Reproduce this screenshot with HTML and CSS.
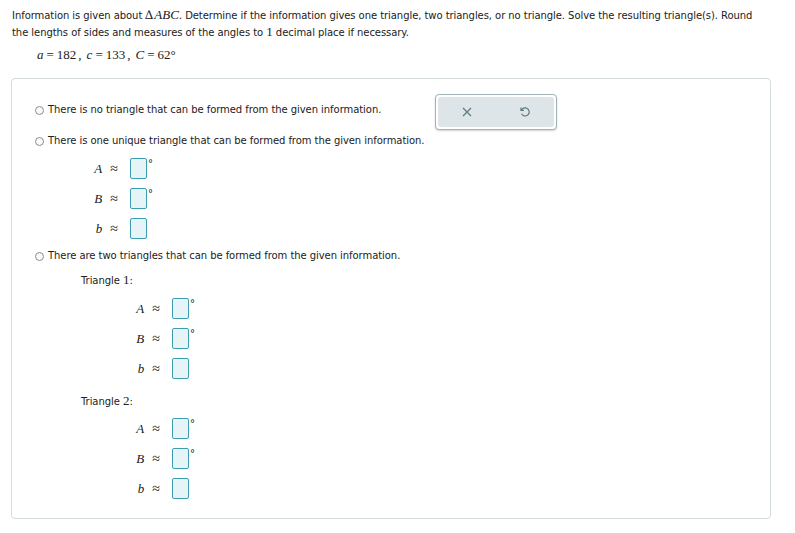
FILE: index.html
```html
<!DOCTYPE html>
<html>
<head>
<meta charset="utf-8">
<link rel="stylesheet" href="styles.css">
</head>
<body>
<p class="prompt">Information is given about <span class="m"><span class="delta">&#8710;</span><i>ABC</i></span>. Determine if the information gives one triangle, two triangles, or no triangle. Solve the resulting triangle(s). Round the lengths of sides and measures of the angles to <span class="m">1</span> decimal place if necessary.</p>
<div class="given"><i>a</i><span class="eq">=</span>182<span class="cm">,</span><i>c</i><span class="eq">=</span>133<span class="cm">,</span><i>C</i><span class="eq">=</span>62°</div>

<div class="card">
  <div class="choices">
    <div class="opt opt1"><span class="radio"></span>There is no triangle that can be formed from the given information.</div>
    <div class="opt opt2"><span class="radio"></span>There is one unique triangle that can be formed from the given information.</div>
    <div class="answers set1">
      <div class="lbl"><i>A</i><span class="ap">≈</span></div><div class="cell"><span class="box"></span><span class="deg">°</span></div>
      <div class="lbl"><i>B</i><span class="ap">≈</span></div><div class="cell"><span class="box"></span><span class="deg">°</span></div>
      <div class="lbl"><i>b</i><span class="ap">≈</span></div><div class="cell"><span class="box"></span></div>
    </div>
    <div class="opt opt3"><span class="radio"></span>There are two triangles that can be formed from the given information.</div>
    <div class="tri tri1">Triangle <span class="m">1</span>:</div>
    <div class="answers set2 s2a">
      <div class="lbl"><i>A</i><span class="ap">≈</span></div><div class="cell"><span class="box"></span><span class="deg">°</span></div>
      <div class="lbl"><i>B</i><span class="ap">≈</span></div><div class="cell"><span class="box"></span><span class="deg">°</span></div>
      <div class="lbl"><i>b</i><span class="ap">≈</span></div><div class="cell"><span class="box"></span></div>
    </div>
    <div class="tri tri2">Triangle <span class="m">2</span>:</div>
    <div class="answers set2 s2b">
      <div class="lbl"><i>A</i><span class="ap">≈</span></div><div class="cell"><span class="box"></span><span class="deg">°</span></div>
      <div class="lbl"><i>B</i><span class="ap">≈</span></div><div class="cell"><span class="box"></span><span class="deg">°</span></div>
      <div class="lbl"><i>b</i><span class="ap">≈</span></div><div class="cell"><span class="box"></span></div>
    </div>
  </div>
  <div class="tools">
    <div class="tools-inner">
      <span class="tool"><svg width="12" height="12" viewBox="0 0 12 12"><path d="M2 2 L10 10 M10 2 L2 10" stroke="#5e7880" stroke-width="1.2" fill="none"/></svg></span>
      <span class="tool"><svg width="12" height="12" viewBox="0 0 24 24"><path d="M4 3 V9 H10" stroke="#5e7880" stroke-width="2.4" fill="none"/><path d="M5.2 15.5 A8 8 0 1 0 6.5 6.5 L4 9" stroke="#5e7880" stroke-width="2.4" fill="none"/></svg></span>
    </div>
  </div>
</div>
</body>
</html>
```

FILE: styles.css
```css
html, body {
  margin: 0;
  padding: 0;
  background: #ffffff;
}
body {
  font-family: "DejaVu Sans", Verdana, sans-serif;
  font-size: 10px;
  letter-spacing: -0.06px;
  color: #212121;
  padding: 7px 0 0 12px;
}
.prompt {
  margin: 0;
  width: 748px;
  line-height: 16px;
}
.m {
  font-family: "Liberation Serif", "Times New Roman", serif;
  font-size: 13px;
  letter-spacing: 0;
}
.delta {
  font-style: normal;
  font-weight: 300;
  margin-right: 1px;
}
.given {
  margin: 4px 0 0 25px;
  height: 20px;
  line-height: 20px;
  font-family: "Liberation Serif", "Times New Roman", serif;
  font-size: 13px;
  letter-spacing: 0;
}
.given .eq {
  margin: 0 3px;
}
.given .cm {
  margin: 0 5px 0 2px;
}
.card {
  margin: 13px 0 0 -1px;
  width: 758px;
  height: 439px;
  border: 1px solid #d3dbdd;
  border-radius: 4px;
  display: flex;
}
.choices {
  flex: none;
  width: 401px;
  padding: 21px 0 0 22px;
}
.opt {
  display: flex;
  align-items: center;
  height: 20px;
  line-height: 20px;
}
.opt2 { margin-top: 11px; }
.opt3 { margin-top: 7px; }
.radio {
  display: inline-block;
  width: 9px;
  height: 9px;
  box-sizing: border-box;
  border: 1px solid #8c8c8c;
  border-radius: 50%;
  background: #fafafa;
  margin: 1px 4px 0 1px;
}
.answers {
  display: grid;
  grid-template-columns: 30px auto;
  grid-auto-rows: 21px;
  column-gap: 12px;
  row-gap: 9px;
  align-items: center;
}
.set1 { margin: 7px 0 0 54px; }
.set2 { margin-left: 96px; }
.s2a { margin-top: 8px; }
.s2b { margin-top: 7px; }
.lbl {
  height: 21px;
  overflow: visible;
  text-align: right;
  font-family: "Liberation Serif", "Times New Roman", serif;
  font-size: 13px;
  line-height: 21px;
  letter-spacing: 0;
  white-space: nowrap;
}
.lbl .ap {
  font-size: 14px;
  line-height: 14px;
  margin-left: 8px;
}
.cell {
  display: flex;
  align-items: flex-start;
  height: 21px;
}
.box {
  display: block;
  width: 17px;
  height: 21px;
  box-sizing: border-box;
  border: 1px solid #3c9fb1;
  border-radius: 2px;
  background: #e6f4f8;
}
.deg {
  font-size: 10px;
  line-height: 10px;
  margin: 1px 0 0 1px;
}
.tri {
  height: 20px;
  line-height: 20px;
  margin-left: 47px;
}
.tri1 { margin-top: 4px; }
.tri2 { margin-top: 12px; }
.tools {
  padding-top: 15px;
}
.tools-inner {
  width: 116px;
  height: 30px;
  padding: 2px;
  border: 1px solid #a2b3b8;
  border-radius: 4px;
  background: #ffffff;
  box-shadow: 0 1px 2px rgba(0, 0, 0, 0.18);
  display: flex;
}
.tool {
  flex: 1;
  display: flex;
  align-items: center;
  justify-content: center;
  background: #dde5e8;
}
.tool:first-child { border-radius: 3px 0 0 3px; }
.tool:last-child { border-radius: 0 3px 3px 0; }
.tool svg { display: block; }
```
